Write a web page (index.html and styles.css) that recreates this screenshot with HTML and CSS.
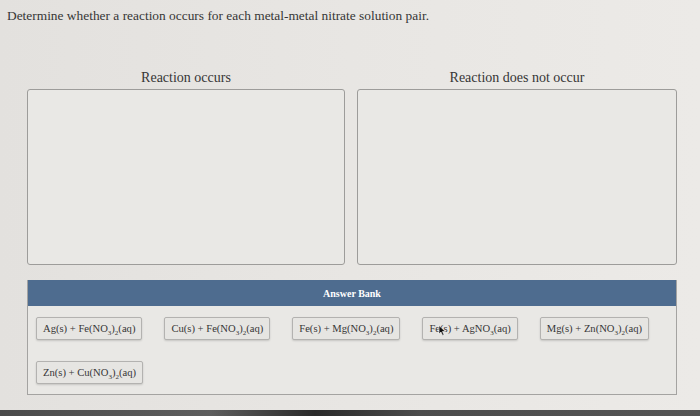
FILE: index.html
```html
<!DOCTYPE html>
<html lang="en">
<head>
  <meta charset="UTF-8" />
  <meta name="viewport" content="width=device-width, initial-scale=1.0" />
  <title>Metal-Metal Nitrate Reactions</title>
  <link rel="stylesheet" href="styles.css">
</head>
<body>

  <div class="page">
    <p class="prompt">Determine whether a reaction occurs for each metal-metal nitrate solution pair.</p>

    <div class="bins">
      <div class="bin">
        <div class="bin-title">Reaction occurs</div>
        <div class="drop-zone"></div>
      </div>
      <div class="bin">
        <div class="bin-title">Reaction does not occur</div>
        <div class="drop-zone"></div>
      </div>
    </div>

    <div class="bank">
      <div class="bank-head">Answer Bank</div>
      <div class="bank-body">
        <div class="chip">Ag(s) + Fe(NO<sub>3</sub>)<sub>2</sub>(aq)</div>
        <div class="chip">Cu(s) + Fe(NO<sub>3</sub>)<sub>2</sub>(aq)</div>
        <div class="chip">Fe(s) + Mg(NO<sub>3</sub>)<sub>2</sub>(aq)</div>
        <div class="chip">Fe(s) + AgNO<sub>3</sub>(aq)
          <svg class="pointer" width="8" height="11" viewBox="0 0 8 11">
            <path d="M1 0.5 L1 9 L3 7 L4.6 10.5 L6 9.8 L4.5 6.5 L7.3 6.5 Z" fill="#111" stroke="#fff" stroke-width="0.6"/>
          </svg>
        </div>
        <div class="chip">Mg(s) + Zn(NO<sub>3</sub>)<sub>2</sub>(aq)</div>
        <div class="chip">Zn(s) + Cu(NO<sub>3</sub>)<sub>2</sub>(aq)</div>
      </div>
    </div>
  </div>

  <div class="bezel"></div>

</body>
</html>
```

FILE: styles.css
```css
body {
  margin: 0;
  font-family: 'Liberation Serif', 'Times New Roman', serif;
  color: #363636;
  background: linear-gradient(90deg, #e3e1de 0%, #e8e6e3 50%, #eceae7 100%);
  height: 416px;
  overflow: hidden;
  display: flex;
  flex-direction: column;
}
.page {
  flex: 1;
  padding: 8px 23px 0 27px;
}
.prompt {
  margin: 0 0 0 -20px;
  font-size: 13.4px;
  line-height: 16px;
}
.bins {
  display: grid;
  grid-template-columns: 318px 320px;
  gap: 12px;
  margin-top: 45px;
}
.bin-title {
  text-align: center;
  font-size: 14px;
  line-height: 18px;
  margin-bottom: 2px;
}
.drop-zone {
  height: 174px;
  border: 1px solid #9d9c9a;
  border-radius: 3px;
  background: #e9e8e5;
}
.bank {
  margin-top: 15px;
  border: 1px solid #a4a3a1;
  border-top: none;
}
.bank-head {
  background: #4e6c8f;
  color: #fff;
  font-weight: bold;
  font-size: 10px;
  text-align: center;
  height: 26px;
  line-height: 28px;
}
.bank-body {
  display: flex;
  flex-wrap: wrap;
  gap: 21px 22px;
  padding: 11px 8px 10px;
  background: #e9e8e5;
  min-height: 66px;
  align-content: flex-start;
}
.chip {
  position: relative;
  height: 21px;
  line-height: 21px;
  padding: 0 6px;
  font-size: 10.6px;
  border: 1px solid #b3b2b0;
  border-radius: 2px;
  background: #e6e5e2;
  box-shadow: 0 1px 2px rgba(0,0,0,0.15);
  white-space: nowrap;
}
.chip sub {
  font-size: 7px;
  line-height: 0;
}
.pointer {
  position: absolute;
  left: 15px;
  top: 7px;
}
.bezel {
  height: 6px;
  background: linear-gradient(90deg, #4a4a4a 0%, #5e5e5e 30%, #2a2a2a 45%, #4c4c4c 60%, #555 100%);
}
```
